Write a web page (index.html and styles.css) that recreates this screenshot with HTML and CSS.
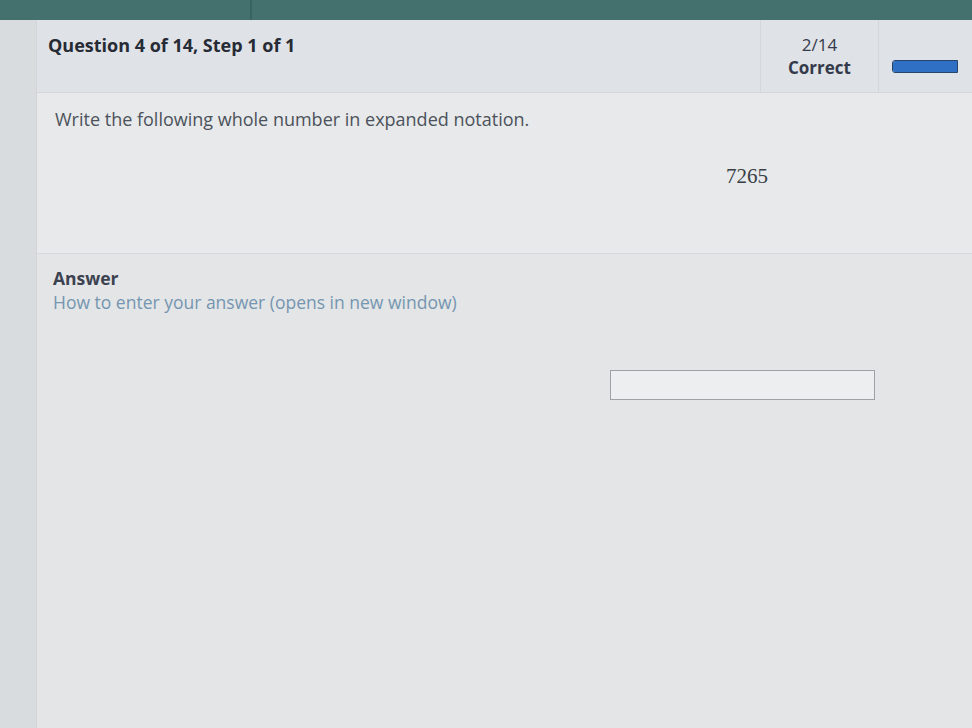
FILE: index.html
```html
<!DOCTYPE html>
<html lang="en">
<head>
<meta charset="utf-8">
<title>Question 4 of 14</title>
<link rel="stylesheet" href="styles.css">
</head>
<body>
<div class="topbar"><div class="topbar-left"></div></div>
<div class="page">
  <div class="gutter"></div>
  <div class="main">
    <header class="qhead">
      <h1 class="qtitle">Question 4 of 14, Step 1 of 1</h1>
      <div class="score">
        <div class="score-num">2/14</div>
        <div class="score-label">Correct</div>
      </div>
      <div class="progress-cell">
        <div class="progress"><div class="progress-fill" style="width:100%"></div></div>
      </div>
    </header>
    <section class="question">
      <p class="prompt">Write the following whole number in expanded notation.</p>
      <div class="number">7265</div>
    </section>
    <section class="answer">
      <div class="answer-label">Answer</div>
      <a class="help-link" href="#">How to enter your answer (opens in new window)</a>
      <div class="input-row">
        <div class="answer-input"></div>
      </div>
    </section>
  </div>
</div>
</body>
</html>
```
FILE: styles.css
```css
html, body {
  margin: 0;
  padding: 0;
}
body {
  width: 972px;
  height: 728px;
  overflow: hidden;
  background: #dcdedf;
  font-family: "Open Sans", "Liberation Sans", sans-serif;
}
.topbar {
  height: 20px;
  background: #44716d;
  display: flex;
}
.topbar-left {
  width: 250px;
  border-right: 2px solid #3a625e;
}
.page {
  display: flex;
  height: 708px;
}
.gutter {
  width: 36px;
  flex: none;
  background: #d9dcde;
}
.main {
  flex: 1;
  display: flex;
  flex-direction: column;
  background: #e4e6e7;
  border-left: 1px solid #d3d6d8;
}
.qhead {
  height: 72px;
  flex: none;
  display: flex;
  background: #dfe2e6;
  border-bottom: 1px solid #d2d5d9;
}
.qtitle {
  flex: 1;
  margin: 0;
  padding: 13px 0 0 11px;
  font-size: 18px;
  font-weight: 700;
  color: #262b35;
  line-height: 24px;
}
.score {
  width: 117px;
  border-left: 1px solid #d3d6da;
  border-right: 1px solid #d3d6da;
  display: flex;
  flex-direction: column;
  align-items: center;
  padding-top: 14px;
  color: #343a4a;
}
.score-num {
  font-size: 17px;
  line-height: 22px;
}
.score-label {
  font-size: 17px;
  font-weight: 700;
  line-height: 24px;
}
.progress-cell {
  width: 93px;
  padding: 40px 0 0 13px;
  box-sizing: border-box;
}
.progress {
  width: 66px;
  height: 13px;
  border: 1px solid #25456b;
  border-radius: 3px 0 0 3px;
  box-sizing: border-box;
  background: #c9ccd0;
  overflow: hidden;
}
.progress-fill {
  height: 100%;
  background: #2f6fc4;
}
.question {
  height: 160px;
  flex: none;
  border-bottom: 1px solid #d5d8da;
  background: #e7e9ea;
}
.prompt {
  margin: 0;
  padding: 13px 0 0 18px;
  font-size: 18px;
  line-height: 26px;
  color: #4c525b;
}
.number {
  margin-top: 31px;
  padding-left: 689px;
  font-family: "Liberation Serif", "Times New Roman", serif;
  font-size: 21px;
  line-height: 26px;
  color: #3a3f47;
}
.answer {
  flex: 1;
  padding: 12px 0 0 16px;
  background: #e3e5e6;
}
.answer-label {
  font-size: 17.5px;
  font-weight: 700;
  line-height: 24px;
  color: #3c4250;
}
.help-link {
  display: block;
  font-size: 17.5px;
  line-height: 24px;
  color: #7595b0;
  text-decoration: none;
}
.input-row {
  padding: 56px 0 0 557px;
}
.answer-input {
  width: 265px;
  height: 30px;
  box-sizing: border-box;
  border: 1px solid #9ea2a6;
  background: #eceeef;
}
```
